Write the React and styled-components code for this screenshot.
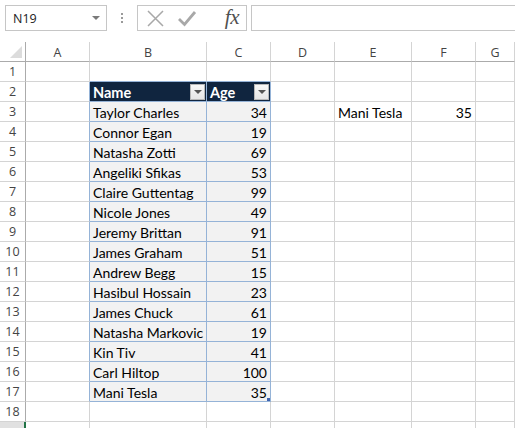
import React from 'react'
import styled, { createGlobalStyle } from 'styled-components'

const GlobalStyle = createGlobalStyle`
  html, body {
    margin: 0;
    padding: 0;
    background: #fff;
    overflow: hidden;
  }
  * { box-sizing: border-box; }
`

const GRID = '#d4d4d4'
const HEAD_LINE = '#ababab'
const TABLE_LINE = '#95b3d7'

const Page = styled.div`
  width: 515px;
  height: 428px;
  overflow: hidden;
  font-family: Lato, "Liberation Sans", sans-serif;
`

const Toolbar = styled.div`
  height: 42px;
  display: flex;
  align-items: flex-start;
  padding: 5px 0 0 5px;
`

const NameBox = styled.div`
  width: 102px;
  height: 26px;
  border: 1px solid #c6c6c6;
  display: flex;
  align-items: center;
  justify-content: space-between;
  padding: 0 6px 0 7px;
  font-family: "Open Sans", "Noto Sans", sans-serif;
  font-size: 12.5px;
  color: #222;
`

const Caret = styled.span`
  width: 0;
  height: 0;
  border-left: 4px solid transparent;
  border-right: 4px solid transparent;
  border-top: 4px solid #7a7a7a;
`

const Dots = styled.div`
  width: 30px;
  height: 26px;
  display: flex;
  flex-direction: column;
  align-items: center;
  justify-content: center;
  gap: 2px;
  span {
    width: 2px;
    height: 2px;
    background: #9a9a9a;
  }
`

const FormulaButtons = styled.div`
  width: 110px;
  height: 26px;
  border: 1px solid #c6c6c6;
  display: flex;
  align-items: center;
  padding: 0 7px 0 8px;
  gap: 12px;
`

const Fx = styled.span`
  margin-left: auto;
  font-family: "Liberation Serif", "DejaVu Serif", serif;
  font-style: italic;
  font-size: 21px;
  color: #505050;
  line-height: 1;
  letter-spacing: -0.5px;
  margin-bottom: 2px;
`

const FormulaInput = styled.div`
  flex: 1;
  height: 26px;
  margin-left: 4px;
  border: 1px solid #c6c6c6;
  border-right: none;
`

const Sheet = styled.div`
  display: grid;
  grid-template-columns: 26px 64px 117px 64px 64px 77px 64px 1fr;
  grid-auto-rows: 20px;
`

const Cell = styled.div`
  border-right: 1px solid ${p => p.$right || GRID};
  border-bottom: 1px solid ${p => p.$bottom || GRID};
  background: ${p => p.$bg || '#fff'};
  display: flex;
  align-items: center;
  justify-content: ${p => (p.$num ? 'flex-end' : 'flex-start')};
  padding: 1px 3px 0 3px;
  font-size: 14px;
  color: #000;
  white-space: nowrap;
  overflow: visible;
  position: relative;
`

const ColHead = styled.div`
  border-right: 1px solid ${GRID};
  border-bottom: 1px solid ${HEAD_LINE};
  display: flex;
  align-items: center;
  justify-content: center;
  font-family: "Open Sans", "Noto Sans", sans-serif;
  font-size: 12.5px;
  color: #444;
  padding-top: 1px;
`

const Corner = styled.div`
  border-right: 1px solid ${HEAD_LINE};
  border-bottom: 1px solid ${HEAD_LINE};
  position: relative;
  &::after {
    content: '';
    position: absolute;
    right: 3px;
    bottom: 3px;
    width: 0;
    height: 0;
    border-left: 12px solid transparent;
    border-bottom: 12px solid #dcdcdc;
  }
`

const RowHead = styled.div`
  border-right: 1px solid ${p => (p.$active ? '#217346' : HEAD_LINE)};
  border-right-width: ${p => (p.$active ? '2px' : '1px')};
  border-bottom: 1px solid ${GRID};
  background: ${p => (p.$active ? '#e1e1e1' : '#fff')};
  display: flex;
  align-items: center;
  justify-content: center;
  font-family: "Open Sans", "Noto Sans", sans-serif;
  font-size: 12.5px;
  color: #444;
`

const TableHead = styled(Cell)`
  background: #10253f;
  color: #fff;
  font-weight: 700;
  font-size: 14.5px;
  justify-content: space-between;
  padding: 1px 1px 0 3px;
`

const FilterButton = styled.span`
  width: 15px;
  height: 16px;
  margin-top: -1px;
  background: linear-gradient(#f7f7f7, #e6e6e6);
  border: 1px solid #b8b8b8;
  display: flex;
  align-items: center;
  justify-content: center;
  &::before {
    content: '';
    width: 0;
    height: 0;
    border-left: 4px solid transparent;
    border-right: 4px solid transparent;
    border-top: 4px solid #555;
  }
`

const Handle = styled.span`
  position: absolute;
  right: 0;
  bottom: 0;
  width: 3px;
  height: 3px;
  background: #3e63b0;
`

const people = [
  ['Taylor Charles', 34],
  ['Connor Egan', 19],
  ['Natasha Zotti', 69],
  ['Angeliki Sfikas', 53],
  ['Claire Guttentag', 99],
  ['Nicole Jones', 49],
  ['Jeremy Brittan', 91],
  ['James Graham', 51],
  ['Andrew Begg', 15],
  ['Hasibul Hossain', 23],
  ['James Chuck', 61],
  ['Natasha Markovic', 19],
  ['Kin Tiv', 41],
  ['Carl Hiltop', 100],
  ['Mani Tesla', 35],
]

const cols = ['A', 'B', 'C', 'D', 'E', 'F', 'G']

const CrossIcon = () => (
  <svg width="19" height="19" viewBox="0 0 19 19">
    <path d="M2 2 L17 17 M17 2 L2 17" stroke="#a8a8a8" strokeWidth="1.5" fill="none" />
  </svg>
)

const CheckIcon = () => (
  <svg width="20" height="18" viewBox="0 0 20 18">
    <path d="M2 10 L7.5 15.5 L18 3" stroke="#a8a8a8" strokeWidth="2.8" fill="none" />
  </svg>
)

function renderRow(r) {
  const cells = []
  const inTable = r >= 2 && r <= 17
  cells.push(
    <RowHead key="h" $active={r === 19}>{r <= 18 ? r : ''}</RowHead>
  )
  cells.push(<Cell key="A" $right={inTable ? TABLE_LINE : undefined} />)
  if (r === 1) {
    cells.push(<Cell key="B" $bottom={TABLE_LINE} />)
    cells.push(<Cell key="C" $bottom={TABLE_LINE} />)
  } else if (r === 2) {
    cells.push(
      <TableHead key="B" $right={TABLE_LINE} $bottom={TABLE_LINE}>
        Name<FilterButton />
      </TableHead>
    )
    cells.push(
      <TableHead key="C" $right={TABLE_LINE} $bottom={TABLE_LINE}>
        Age<FilterButton />
      </TableHead>
    )
  } else if (inTable) {
    const [name, age] = people[r - 3]
    cells.push(
      <Cell key="B" $bg="#f2f2f2" $right={TABLE_LINE} $bottom={TABLE_LINE}>
        {name}
      </Cell>
    )
    cells.push(
      <Cell key="C" $num $bg="#f2f2f2" $right={TABLE_LINE} $bottom={TABLE_LINE}>
        {age}
        {r === 17 && <Handle />}
      </Cell>
    )
  } else {
    cells.push(<Cell key="B" />)
    cells.push(<Cell key="C" />)
  }
  cells.push(<Cell key="D" />)
  if (r === 3) {
    cells.push(<Cell key="E">Mani Tesla</Cell>)
    cells.push(<Cell key="F" $num>35</Cell>)
  } else {
    cells.push(<Cell key="E" />)
    cells.push(<Cell key="F" />)
  }
  cells.push(<Cell key="G" />)
  return <React.Fragment key={r}>{cells}</React.Fragment>
}

export default function App() {
  const rows = Array.from({ length: 19 }, (_, i) => i + 1)
  return (
    <Page>
      <GlobalStyle />
      <Toolbar>
        <NameBox>
          N19
          <Caret />
        </NameBox>
        <Dots>
          <span />
          <span />
          <span />
        </Dots>
        <FormulaButtons>
          <CrossIcon />
          <CheckIcon />
          <Fx>fx</Fx>
        </FormulaButtons>
        <FormulaInput />
      </Toolbar>
      <Sheet>
        <Corner />
        {cols.map(c => (
          <ColHead key={c}>{c}</ColHead>
        ))}
        {rows.map(renderRow)}
      </Sheet>
    </Page>
  )
}
